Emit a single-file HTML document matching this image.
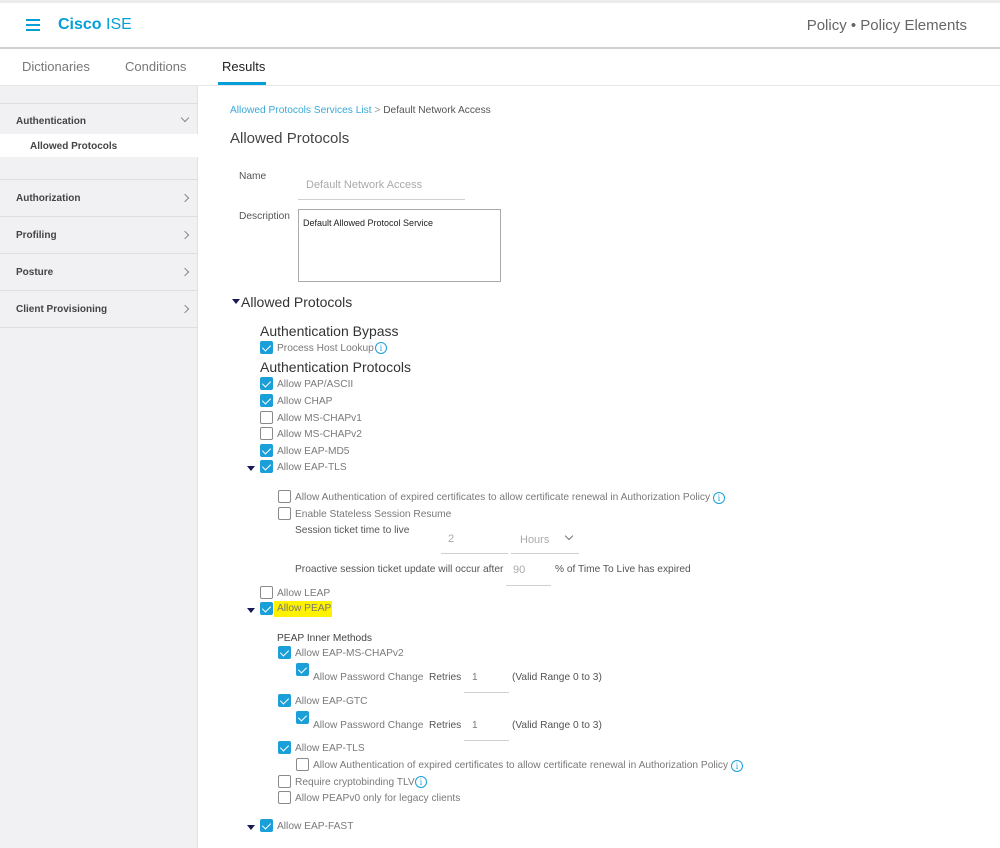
<!DOCTYPE html>
<html><head><meta charset="utf-8"><style>
*{margin:0;padding:0;box-sizing:border-box}
body{width:1000px;height:848px;overflow:hidden;background:#fff;font-family:"Liberation Sans",sans-serif;position:relative;color:#666}
.a{position:absolute;white-space:nowrap}
.t{font-size:10.2px;line-height:16px;color:#7a7a7a}
.cb{position:absolute;width:13px;height:13px;border:1px solid #8a8a8a;border-radius:2px;background:#fff}
.cb.c{background:#1a9fd8;border-color:#1a9fd8}
.cb.c::after{content:"";position:absolute;left:3px;top:1px;width:4px;height:7px;border:solid #fff;border-width:0 1px 1px 0;transform:rotate(45deg)}
.tri{position:absolute;width:0;height:0;border-left:4px solid transparent;border-right:4px solid transparent;border-top:5px solid #1a1a5a}
.info{position:absolute;width:12px;height:12px;border:1px solid #1a9fd8;border-radius:50%;color:#1a9fd8;font-size:9px;line-height:10px;text-align:center;font-family:"Liberation Serif",serif}
.side{position:absolute;left:0;width:198px;border-bottom:1px solid #dedede;font-size:10px;font-weight:bold;color:#444}
.chev{position:absolute;right:10px;width:6px;height:6px;border:solid #888;border-width:1px 1px 0 0;transform:rotate(45deg)}
.ul{position:absolute;height:1px;background:#d0d0d0}
</style></head><body>
<div class="a" style="left:0;top:0;width:1000px;height:3px;background:#ececec"></div>
<div class="a" style="left:0;top:47px;width:1000px;height:2px;background:#cfcfcf"></div>
<div class="a" style="left:26px;top:19px;width:14px;height:2px;background:#049fd9"></div>
<div class="a" style="left:26px;top:24px;width:14px;height:2px;background:#049fd9"></div>
<div class="a" style="left:26px;top:29px;width:14px;height:2px;background:#049fd9"></div>
<div class="a" style="left:58px;top:15px;font-size:16px;line-height:20px;color:#049fd9"><b>Cisco</b> ISE</div>
<div class="a" style="right:33px;top:16px;font-size:15px;line-height:20px;color:#666">Policy • Policy Elements</div>
<div class="a" style="left:22px;top:59px;font-size:13px;line-height:16px;color:#777">Dictionaries</div>
<div class="a" style="left:125px;top:59px;font-size:13px;line-height:16px;color:#777">Conditions</div>
<div class="a" style="left:222px;top:59px;font-size:13px;line-height:16px;color:#222">Results</div>
<div class="a" style="left:218px;top:82px;width:48px;height:3px;background:#049fd9"></div>
<div class="a" style="left:0;top:85px;width:1000px;height:1px;background:#e6e6e6"></div>
<div class="a" style="left:0;top:86px;width:198px;height:762px;background:#f1f1f3;border-right:1px solid #e2e2e2"></div>
<div class="a" style="left:0;top:103px;width:198px;height:1px;background:#dedede"></div>
<div class="side" style="top:104px;height:30px;border:none"><span class="a" style="left:16px;top:12px">Authentication</span><div class="chev" style="top:11px;transform:rotate(135deg)"></div></div>
<div class="a" style="left:0;top:134px;width:198px;height:23px;background:#fff;font-size:10px;font-weight:bold;color:#444;padding:7px 0 0 30px">Allowed Protocols</div>
<div class="a" style="left:0;top:179px;width:198px;height:1px;background:#dedede"></div>
<div class="side" style="top:180px;height:37px"><span class="a" style="left:16px;top:13px">Authorization</span><div class="chev" style="top:15px"></div></div>
<div class="side" style="top:217px;height:37px"><span class="a" style="left:16px;top:13px">Profiling</span><div class="chev" style="top:15px"></div></div>
<div class="side" style="top:254px;height:37px"><span class="a" style="left:16px;top:13px">Posture</span><div class="chev" style="top:15px"></div></div>
<div class="side" style="top:291px;height:37px"><span class="a" style="left:16px;top:13px">Client Provisioning</span><div class="chev" style="top:15px"></div></div>

<div class="a t" style="left:230px;top:103px"><span style="color:#3aa8d8">Allowed Protocols Services List</span> <span style="color:#999">&gt;</span> <span style="color:#555">Default Network Access</span></div>
<div class="a" style="left:230px;top:130px;font-size:15px;line-height:18px;color:#444">Allowed Protocols</div>
<div class="a t" style="left:239px;top:169px;color:#555">Name</div>
<div class="a" style="left:306px;top:178px;font-size:11px;line-height:14px;color:#aaa">Default Network Access</div>
<div class="ul" style="left:298px;top:199px;width:167px"></div>
<div class="a t" style="left:239px;top:209px;color:#555">Description</div>
<div class="a" style="left:298px;top:209px;width:203px;height:73px;border:1px solid #aaa;font-size:9px;padding:8px 4px;color:#222">Default Allowed Protocol Service</div>
<div class="tri" style="left:232px;top:299px"></div>
<div class="a" style="left:241px;top:293px;font-size:14px;line-height:18px;color:#333">Allowed Protocols</div>
<div class="a" style="left:260px;top:322px;font-size:14px;line-height:18px;color:#333">Authentication Bypass</div>
<div class="cb c" style="left:260px;top:341px"></div><div class="a t" style="left:277px;top:341px">Process Host Lookup</div><div class="info" style="left:375px;top:342px">i</div>
<div class="a" style="left:260px;top:358px;font-size:14px;line-height:18px;color:#333">Authentication Protocols</div>
<div class="cb c" style="left:260px;top:377px"></div><div class="a t" style="left:277px;top:377px">Allow PAP/ASCII</div>
<div class="cb c" style="left:260px;top:394px"></div><div class="a t" style="left:277px;top:394px">Allow CHAP</div>
<div class="cb" style="left:260px;top:411px"></div><div class="a t" style="left:277px;top:411px">Allow MS-CHAPv1</div>
<div class="cb" style="left:260px;top:427px"></div><div class="a t" style="left:277px;top:427px">Allow MS-CHAPv2</div>
<div class="cb c" style="left:260px;top:444px"></div><div class="a t" style="left:277px;top:444px">Allow EAP-MD5</div>
<div class="tri" style="left:247px;top:466px"></div><div class="cb c" style="left:260px;top:460px"></div><div class="a t" style="left:277px;top:460px">Allow EAP-TLS</div>
<div class="cb" style="left:278px;top:490px"></div><div class="a t" style="left:295px;top:490px">Allow Authentication of expired certificates to allow certificate renewal in Authorization Policy</div><div class="info" style="left:713px;top:492px">i</div>
<div class="cb" style="left:278px;top:507px"></div><div class="a t" style="left:295px;top:507px">Enable Stateless Session Resume</div>
<div class="a t" style="left:295px;top:523px;color:#555">Session ticket time to live</div>
<div class="a" style="left:448px;top:532px;font-size:11px;line-height:14px;color:#aaa">2</div>
<div class="ul" style="left:441px;top:553px;width:67px"></div>
<div class="a" style="left:520px;top:533px;font-size:11px;line-height:14px;color:#aaa">Hours</div>
<div class="a" style="left:566px;top:533px;width:6px;height:6px;border:solid #777;border-width:0 1px 1px 0;transform:rotate(45deg)"></div>
<div class="ul" style="left:511px;top:553px;width:68px"></div>
<div class="a t" style="left:295px;top:562px;color:#555">Proactive session ticket update will occur after</div>
<div class="a" style="left:513px;top:563px;font-size:11px;line-height:14px;color:#aaa">90</div>
<div class="ul" style="left:506px;top:585px;width:45px"></div>
<div class="a t" style="left:555px;top:562px;color:#555">% of Time To Live has expired</div>
<div class="cb" style="left:260px;top:586px"></div><div class="a t" style="left:277px;top:586px">Allow LEAP</div>
<div class="tri" style="left:247px;top:608px"></div><div class="cb c" style="left:260px;top:602px"></div>
<div class="a t" style="left:274px;top:601px;width:58px;height:16px;background:#fff200;padding:0 3px;color:#777">Allow PEAP</div>
<div class="a t" style="left:277px;top:631px;color:#444">PEAP Inner Methods</div>
<div class="cb c" style="left:278px;top:646px"></div><div class="a t" style="left:295px;top:646px">Allow EAP-MS-CHAPv2</div>
<div class="cb c" style="left:296px;top:663px"></div><div class="a t" style="left:313px;top:670px">Allow Password Change</div>
<div class="a t" style="left:429px;top:670px;color:#555">Retries</div><div class="a t" style="left:472px;top:670px">1</div><div class="ul" style="left:464px;top:692px;width:45px"></div>
<div class="a t" style="left:512px;top:670px;color:#555">(Valid Range 0 to 3)</div>
<div class="cb c" style="left:278px;top:694px"></div><div class="a t" style="left:295px;top:694px">Allow EAP-GTC</div>
<div class="cb c" style="left:296px;top:711px"></div><div class="a t" style="left:313px;top:718px">Allow Password Change</div>
<div class="a t" style="left:429px;top:718px;color:#555">Retries</div><div class="a t" style="left:472px;top:718px">1</div><div class="ul" style="left:464px;top:740px;width:45px"></div>
<div class="a t" style="left:512px;top:718px;color:#555">(Valid Range 0 to 3)</div>
<div class="cb c" style="left:278px;top:741px"></div><div class="a t" style="left:295px;top:741px">Allow EAP-TLS</div>
<div class="cb" style="left:296px;top:758px"></div><div class="a t" style="left:313px;top:758px">Allow Authentication of expired certificates to allow certificate renewal in Authorization Policy</div><div class="info" style="left:731px;top:760px">i</div>
<div class="cb" style="left:278px;top:775px"></div><div class="a t" style="left:295px;top:775px">Require cryptobinding TLV</div><div class="info" style="left:415px;top:776px">i</div>
<div class="cb" style="left:278px;top:791px"></div><div class="a t" style="left:295px;top:791px">Allow PEAPv0 only for legacy clients</div>
<div class="tri" style="left:247px;top:825px"></div><div class="cb c" style="left:260px;top:819px"></div><div class="a t" style="left:277px;top:819px">Allow EAP-FAST</div>
</body></html>
